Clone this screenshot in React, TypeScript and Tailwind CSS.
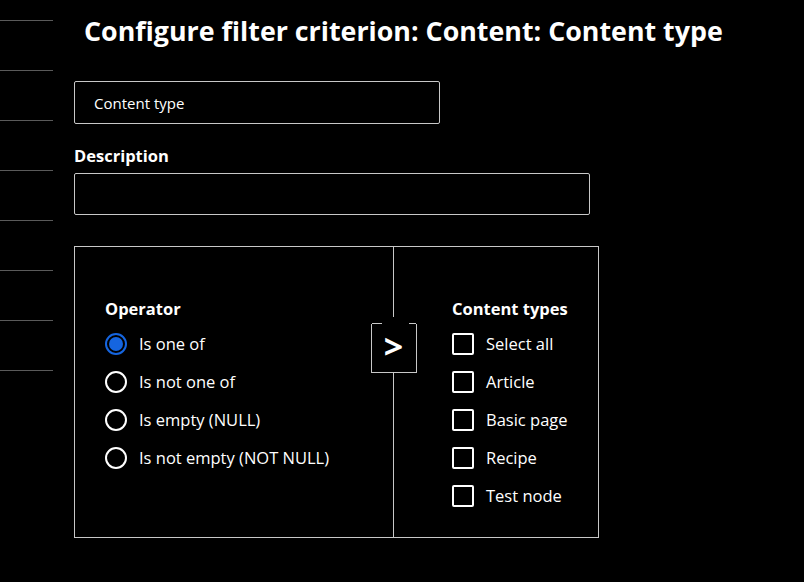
import { useState } from "react";

const operators = ["Is one of", "Is not one of", "Is empty (NULL)", "Is not empty (NOT NULL)"];
const types = ["Select all", "Article", "Basic page", "Recipe", "Test node"];

function Radio({ checked }: { checked: boolean }) {
  if (checked) {
    return (
      <span className="w-[22px] h-[22px] rounded-full border-2 border-[#1565e0] p-[2px] shrink-0 flex">
        <span className="flex-1 rounded-full bg-[#1565e0]" />
      </span>
    );
  }
  return <span className="w-[22px] h-[22px] rounded-full border-2 border-white shrink-0" />;
}

export default function App() {
  const [op, setOp] = useState(0);
  const [picked, setPicked] = useState<string[]>([]);

  const toggle = (t: string) =>
    setPicked((p) => (p.includes(t) ? p.filter((x) => x !== t) : [...p, t]));

  return (
    <div
      className="w-[804px] h-[582px] bg-black text-white flex overflow-hidden"
      style={{ fontFamily: "'Open Sans', 'Noto Sans', sans-serif" }}
    >
      {/* sidebar */}
      <div className="w-[53px] pt-[20px] flex flex-col shrink-0">
        {Array.from({ length: 8 }).map((_, i) => (
          <div key={i} className="h-[50px] border-t border-[#5a5a5a]" />
        ))}
      </div>

      <div className="ml-[21px] pt-[13px] flex flex-col">
        <h1 className="ml-[10px] h-[36px] leading-[36px] text-[26.8px] font-bold whitespace-nowrap">
          Configure filter criterion: Content: Content type
        </h1>

        <div className="mt-[32px] w-[366px] h-[43px] border border-[#c8c8c8] rounded-[2px] flex items-center px-[19px] text-[15px] pt-[2px]">
          Content type
        </div>

        <label className="mt-[22px] h-[20px] leading-[20px] text-[16.5px] font-bold">Description</label>
        <div className="mt-[7px] w-[516px] h-[42px] border border-[#c8c8c8] rounded-[2px]" />

        <div className="mt-[31px] w-[525px] h-[292px] border border-[#c8c8c8] flex">
          <div className="w-[318px] pl-[30px] pt-[51px]">
            <div className="h-[22px] leading-[22px] text-[16.5px] font-bold">Operator</div>
            <div className="mt-[13px] flex flex-col gap-[16px]">
              {operators.map((o, i) => (
                <button
                  key={o}
                  onClick={() => setOp(i)}
                  className="h-[22px] flex items-center gap-[12px] text-[16.5px] text-left"
                >
                  <Radio checked={op === i} />
                  <span>{o}</span>
                </button>
              ))}
            </div>
          </div>

          <div className="w-px flex flex-col items-center">
            <div className="w-px h-[70px] bg-[#c8c8c8] shrink-0" />
            <button className="relative mt-[7px] w-[46px] h-[49px] shrink-0 border-x border-b border-[#c8c8c8] flex items-center justify-center text-[34px] font-bold leading-none pb-[4px]">
              <span className="absolute -top-px left-0 w-[10px] h-px bg-[#c8c8c8]" />
              <span className="absolute -top-px right-0 w-[7px] h-px bg-[#c8c8c8]" />
              &gt;
            </button>
            <div className="w-px flex-1 bg-[#c8c8c8]" />
          </div>

          <div className="flex-1 pl-[58px] pt-[51px]">
            <div className="h-[22px] leading-[22px] text-[16.5px] font-bold">Content types</div>
            <div className="mt-[13px] flex flex-col gap-[16px]">
              {types.map((t) => (
                <button
                  key={t}
                  onClick={() => toggle(t)}
                  className="h-[22px] flex items-center gap-[12px] text-[16.5px] text-left"
                >
                  <span className="w-[22px] h-[22px] border-2 border-white rounded-[2px] shrink-0 flex items-center justify-center text-[14px] leading-none">
                    {picked.includes(t) ? "✓" : ""}
                  </span>
                  <span>{t}</span>
                </button>
              ))}
            </div>
          </div>
        </div>
      </div>
    </div>
  );
}
